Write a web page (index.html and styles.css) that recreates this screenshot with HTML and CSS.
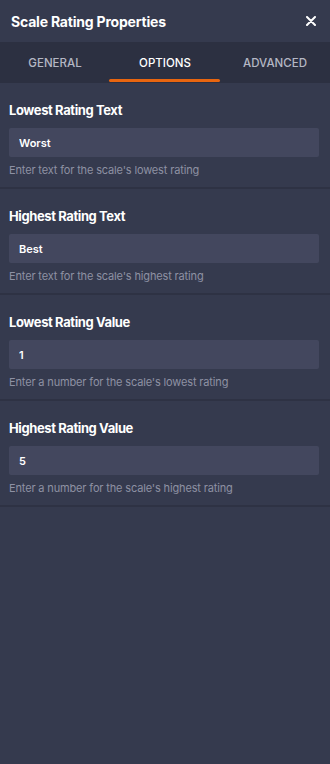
FILE: index.html
```html
<!DOCTYPE html>
<html lang="en">
<head>
  <meta charset="UTF-8" />
  <meta name="viewport" content="width=device-width, initial-scale=1.0"/>
  <title>Scale Rating Properties</title>
  <link rel="stylesheet" href="styles.css">
</head>
<body>

  <div class="panel">
    <header class="panel-head">
      <h1>Scale Rating Properties</h1>
      <button class="close-btn" aria-label="Close">
        <svg width="10" height="10" viewBox="0 0 10 10">
          <path d="M1 1 L9 9 M9 1 L1 9" stroke="#fff" stroke-width="2" stroke-linecap="round"/>
        </svg>
      </button>
    </header>

    <nav class="tabs">
      <div class="tab">GENERAL</div>
      <div class="tab active">OPTIONS</div>
      <div class="tab">ADVANCED</div>
    </nav>

    <div class="field">
      <label>Lowest Rating Text</label>
      <input type="text" value="Worst">
      <p class="hint">Enter text for the scale's lowest rating</p>
    </div>

    <div class="field">
      <label>Highest Rating Text</label>
      <input type="text" value="Best">
      <p class="hint">Enter text for the scale's highest rating</p>
    </div>

    <div class="field">
      <label>Lowest Rating Value</label>
      <input type="text" value="1">
      <p class="hint">Enter a number for the scale's lowest rating</p>
    </div>

    <div class="field">
      <label>Highest Rating Value</label>
      <input type="text" value="5">
      <p class="hint">Enter a number for the scale's highest rating</p>
    </div>
  </div>

</body>
</html>
```

FILE: styles.css
```css
body {
  margin: 0;
  padding: 0;
  font-family: 'Inter', 'Lato', sans-serif;
  background: #353a4e;
  color: #fff;
  min-height: 100vh;
}

.panel {
  display: flex;
  flex-direction: column;
}

.panel-head {
  height: 42px;
  display: flex;
  align-items: center;
  justify-content: space-between;
  padding: 0 14px 0 11px;
  background: #353a4e;
}

.panel-head h1 {
  margin: 0;
  font-size: 14px;
  font-weight: 700;
  letter-spacing: -0.2px;
}

.close-btn {
  background: none;
  border: none;
  padding: 0;
  display: flex;
  cursor: pointer;
}

.tabs {
  display: grid;
  grid-template-columns: repeat(3, 1fr);
  height: 41px;
  background: #2c3041;
}

.tab {
  display: flex;
  align-items: center;
  justify-content: center;
  font-size: 11.5px;
  font-weight: 500;
  color: #b4b7c4;
  position: relative;
}

.tab.active {
  color: #fff;
}

.tab.active::after {
  content: '';
  position: absolute;
  left: -1px;
  right: 0;
  bottom: 1px;
  height: 3px;
  border-radius: 2px;
  background: #e8650f;
}

.field {
  padding: 19px 11px 0 9px;
  height: 85px;
  border-bottom: 2px solid #2e3244;
}

.field label {
  display: block;
  font-size: 13px;
  font-weight: 700;
  letter-spacing: -0.4px;
  margin-bottom: 10px;
  padding-left: 0;
}

.field input {
  box-sizing: border-box;
  width: 100%;
  height: 29px;
  border: none;
  border-radius: 2px;
  background: #43475e;
  color: #fff;
  font-family: inherit;
  font-size: 11px;
  font-weight: 600;
  padding: 0 10px;
  outline: none;
}

.hint {
  margin: 6px 0 0;
  font-size: 11px;
  letter-spacing: -0.15px;
  color: #8e91a3;
}
```
